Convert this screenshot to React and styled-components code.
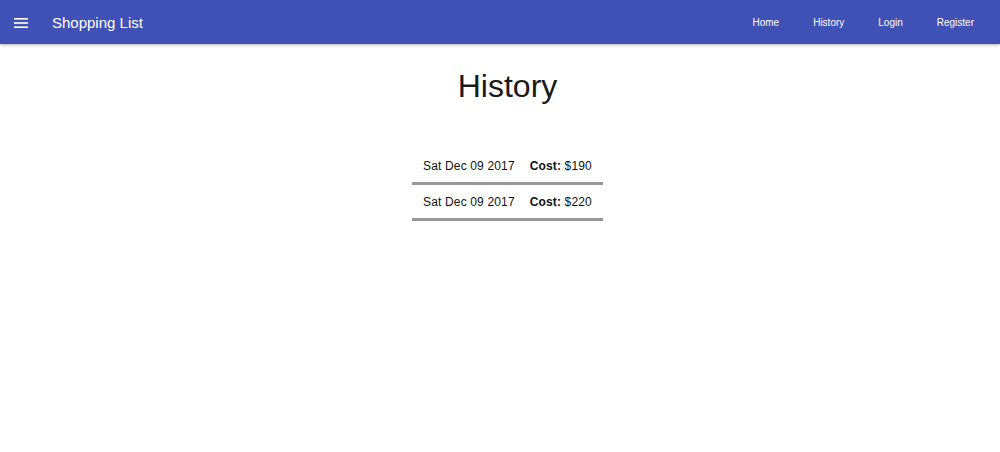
import React from "react";
import styled, { createGlobalStyle } from "styled-components";

const GlobalStyle = createGlobalStyle`
  html, body {
    margin: 0;
    padding: 0;
    background: #fff;
    font-family: "Liberation Sans", Arial, Helvetica, sans-serif;
  }
`;

const orders = [
  { date: "Sat Dec 09 2017", cost: 190 },
  { date: "Sat Dec 09 2017", cost: 220 },
];

const links = ["Home", "History", "Login", "Register"];

const App = () => {
  return (
    <>
      <GlobalStyle />
      <AppBar>
        <MenuButton aria-label="menu">
          <svg width="14" height="10" viewBox="0 0 14 10">
            <rect x="0" y="0" width="14" height="1.6" fill="#fff" />
            <rect x="0" y="4.2" width="14" height="1.6" fill="#fff" />
            <rect x="0" y="8.4" width="14" height="1.6" fill="#fff" />
          </svg>
        </MenuButton>
        <Title>Shopping List</Title>
        <Nav>
          {links.map((l) => (
            <NavLink key={l}>{l}</NavLink>
          ))}
        </Nav>
      </AppBar>
      <Main>
        <Heading>History</Heading>
        <List>
          {orders.map((o, i) => (
            <Row key={i}>
              <span>{o.date}</span>
              <span>
                <b>Cost:</b> ${o.cost}
              </span>
            </Row>
          ))}
        </List>
      </Main>
    </>
  );
};

const AppBar = styled.header`
  height: 44px;
  background: #3f51b5;
  display: flex;
  align-items: center;
  padding: 0 9px 0 14px;
  box-shadow: 0 1px 3px rgba(0, 0, 0, 0.3);
  color: #fff;
  position: relative;
`;

const MenuButton = styled.div`
  width: 14px;
  height: 10px;
  display: flex;
  margin-top: 2px;
`;

const Title = styled.div`
  font-size: 15px;
  margin-left: 24px;
  flex: 1;
  margin-top: 1px;
`;

const Nav = styled.nav`
  display: flex;
  align-items: center;
`;

const NavLink = styled.a`
  font-size: 10px;
  padding: 0 17px;
  cursor: pointer;
`;

const Main = styled.main`
  display: flex;
  flex-direction: column;
  align-items: center;
  padding-left: 15px;
  color: #1a1a1a;
`;

const Heading = styled.h1`
  font-size: 32px;
  font-weight: 400;
  margin: 24px 0 44px;
  line-height: 37px;
`;

const List = styled.div`
  width: 191px;
`;

const Row = styled.div`
  display: flex;
  justify-content: center;
  gap: 15px;
  font-size: 12px;
  letter-spacing: 0.15px;
  line-height: 16px;
  padding: 9px 0 8px;
  border-bottom: 3px solid #979797;
  color: #111;
`;

export default App;
